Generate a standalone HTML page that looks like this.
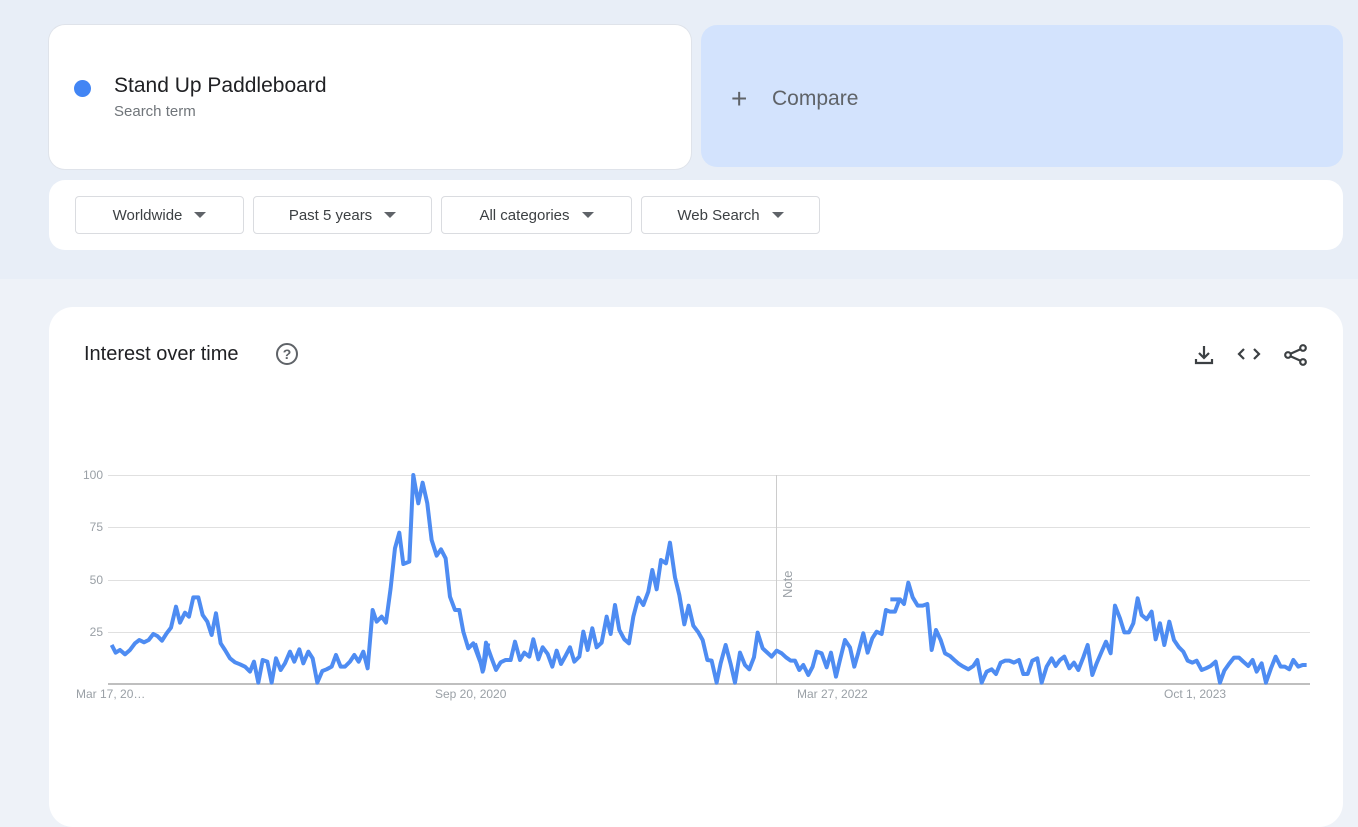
<!DOCTYPE html>
<html><head><meta charset="utf-8"><style>
body{margin:0;width:1358px;height:781px;overflow:hidden;background:#eef2f8;font-family:"Liberation Sans",Arial,sans-serif;position:relative}
.top{position:absolute;left:0;top:0;width:1358px;height:279px;background:#e8eef7}
.card{position:absolute;background:#fff;border-radius:16px}
.chip{position:absolute;top:196px;height:38px;border:1px solid #dadce0;border-radius:4px;box-sizing:border-box;font-size:15px;color:#3c4043;display:flex;align-items:center;justify-content:center;gap:12px}
.tri{width:0;height:0;border-left:6px solid transparent;border-right:6px solid transparent;border-top:6px solid #5f6368}
.lab{position:absolute;font-size:12px;color:#9aa0a6}
</style></head><body>
<div class="top"></div>
<div class="card" style="left:49px;top:25px;width:642px;height:144px;box-shadow:0 0 0 1px #dfe3ea"></div>
<div style="position:absolute;left:74px;top:80px;width:17px;height:17px;border-radius:50%;background:#4285f4"></div>
<div style="position:absolute;left:114px;top:74px;font-size:21px;color:#202124">Stand Up Paddleboard</div>
<div style="position:absolute;left:114px;top:103px;font-size:15px;color:#70757a">Search term</div>
<div class="card" style="left:701px;top:25px;width:642px;height:142px;background:#d3e3fd"></div>
<div style="position:absolute;left:731px;top:83px;font-size:28px;color:#5f6368;font-weight:300">+</div>
<div style="position:absolute;left:772px;top:87px;font-size:21px;color:#5f6368">Compare</div>
<div class="card" style="left:49px;top:180px;width:1294px;height:70px"></div>
<div class="chip" style="left:75px;width:169px">Worldwide<span class="tri"></span></div>
<div class="chip" style="left:253px;width:179px">Past 5 years<span class="tri"></span></div>
<div class="chip" style="left:441px;width:191px">All categories<span class="tri"></span></div>
<div class="chip" style="left:641px;width:179px">Web Search<span class="tri"></span></div>
<div class="card" style="left:49px;top:307px;width:1294px;height:520px;border-radius:24px"></div>
<div style="position:absolute;left:84px;top:343px;font-size:20px;color:#202124">Interest over time</div>
<div style="position:absolute;left:276px;top:343px;width:18px;height:18px;border:2px solid #5f6368;border-radius:50%;font-size:14px;font-weight:bold;color:#5f6368;text-align:center;line-height:19px">?</div>
<svg style="position:absolute;left:1190px;top:340px" width="130" height="30" fill="none" stroke="#3c4043" stroke-width="2.2">
<path d="M14 6v12M9 13l5 5 5-5M6 19v4h16v-4"/>
<path d="M54 9l-5 5 5 5M64 9l5 5-5 5"/>
<circle cx="113" cy="8" r="2.8"/><circle cx="113" cy="22" r="2.8"/><circle cx="98" cy="15" r="2.8"/><path d="M100.5 13.7l10-4.5M100.5 16.3l10 4.5"/>
</svg>
<svg style="position:absolute;left:0;top:0" width="1358" height="781">
<g stroke="#e0e0e0" stroke-width="1"><line x1="108" x2="1310" y1="475.5" y2="475.5"/><line x1="108" x2="1310" y1="527.5" y2="527.5"/><line x1="108" x2="1310" y1="580.5" y2="580.5"/><line x1="108" x2="1310" y1="632.5" y2="632.5"/></g>
<line x1="776.5" x2="776.5" y1="475" y2="684" stroke="#ccc"/>
<line x1="108" x2="1310" y1="684" y2="684" stroke="#aaa" stroke-width="1.5"/>
<text x="0" y="0" transform="translate(792,598) rotate(-90)" font-size="13" fill="#9aa0a6" font-family="Liberation Sans">Note</text>
<g fill="none" stroke="#4e8cf2" stroke-width="12" stroke-linejoin="round">
<polyline transform="translate(70,460) scale(0.3333)" points="125,555 137,578 150,570 165,583 180,570 195,550 208,540 222,547 236,540 250,522 262,528 276,542 290,520 303,503 318,440 330,488 345,458 357,470 370,412 385,412 398,465 412,485 425,525 438,460 452,550 465,570 480,595 495,607 510,613 525,620 540,635 552,605 565,668 578,600 592,605 605,668 618,595 632,630 645,610 660,575 673,605 688,568 700,610 715,575 728,595 742,668 757,633 770,628 785,620 798,585 812,620 825,620 840,605 853,585 866,605 880,575 893,625 908,450 920,485 935,470 948,488 962,385 975,265 988,218 1000,312 1018,305 1030,45 1045,130 1058,68 1072,130 1085,240 1100,287 1113,268 1127,295 1140,410 1155,450 1168,450 1180,515 1195,565 1210,550 1225,590 1240,630 1255,550"/>
<polyline transform="translate(480,460) scale(0.3333)" points="-15,550 0,600 8,635 18,548 33,590 48,630 62,607 77,600 92,600 105,545 120,600 133,578 148,590 160,538 175,598 188,562 203,582 217,620 230,572 243,612 258,585 270,562 283,605 298,590 310,515 323,570 337,505 350,562 365,548 380,470 392,522 405,435 418,510 433,538 447,550 460,470 475,413 490,435 505,395 517,330 530,388 543,300 558,310 570,248 585,352 598,405 613,493 626,437 640,497 655,517 668,540 682,600 695,602 710,668 722,610 737,555 752,612 765,668 780,578 795,615 808,628 822,592 833,518 848,565 862,578 875,590 890,572 905,580 918,592 932,602 945,602 958,630 970,615 985,645 998,620 1010,575 1025,580 1040,622 1053,578 1068,650 1080,600 1095,540 1110,562 1123,620 1135,578 1150,520 1163,578 1177,535 1190,515 1205,522 1218,450 1230,455 1245,455 1258,420"/>
<polyline transform="translate(890,460) scale(0.3333)" points="1,418 30,418 42,432 55,368 68,412 83,437 98,437 112,432 125,570 138,510 152,540 165,580 180,588 193,600 207,612 220,620 235,628 250,618 262,600 275,668 290,635 305,628 318,642 332,608 345,602 358,602 372,608 387,600 400,642 413,642 427,602 442,595 455,668 470,620 485,595 497,618 510,600 523,590 538,625 552,608 565,630 580,592 593,555 607,645 620,610 635,575 648,545 662,580 675,437 690,475 703,517 717,517 730,490 743,415 755,465 770,478 785,455 797,538 810,490 823,555 838,485 852,540 867,562 880,575 893,602 907,608 920,602 935,630 948,625 962,618 977,605 990,668 1003,632 1017,612 1032,593 1047,593 1060,605 1075,618 1088,600 1100,635 1115,610 1128,668 1143,625 1157,590 1172,620 1185,620 1198,628 1210,600 1225,620 1238,615 1250,615"/>
</g>
</svg>
<div class="lab" style="left:70px;top:468px;width:33px;text-align:right">100</div>
<div class="lab" style="left:70px;top:520px;width:33px;text-align:right">75</div>
<div class="lab" style="left:70px;top:573px;width:33px;text-align:right">50</div>
<div class="lab" style="left:70px;top:625px;width:33px;text-align:right">25</div>
<div class="lab" style="left:76px;top:687px">Mar 17, 20…</div>
<div class="lab" style="left:435px;top:687px">Sep 20, 2020</div>
<div class="lab" style="left:797px;top:687px">Mar 27, 2022</div>
<div class="lab" style="left:1164px;top:687px">Oct 1, 2023</div>
</body></html>
